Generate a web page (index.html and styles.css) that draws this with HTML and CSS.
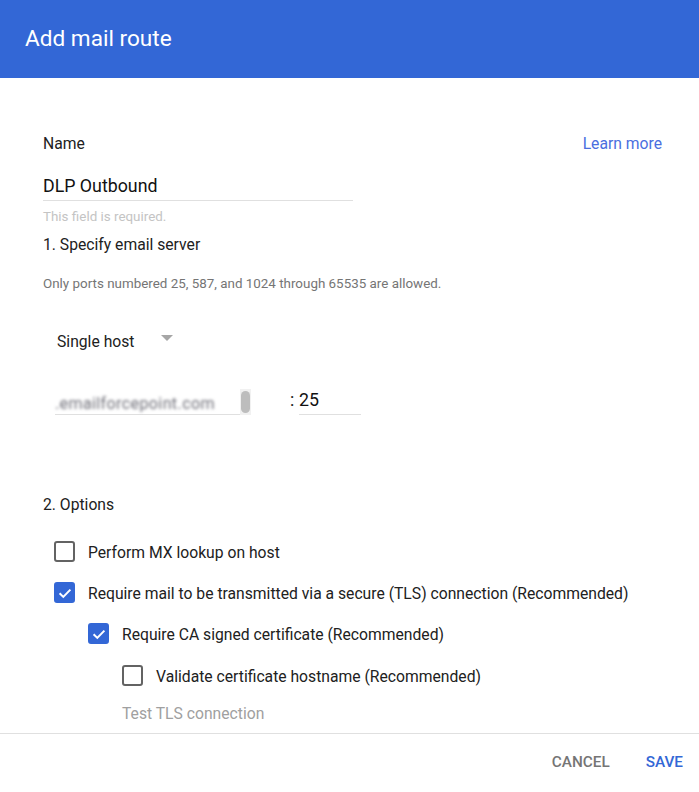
FILE: index.html
```html
<!DOCTYPE html>
<html>
<head>
<meta charset="utf-8">
<link rel="stylesheet" href="styles.css">
</head>
<body>
<div class="dialog">
  <header class="header"><h1 class="title">Add mail route</h1></header>
  <main class="content">
    <div class="name-row">
      <span class="label">Name</span>
      <a class="link">Learn more</a>
    </div>
    <div class="name-field"><span class="name-value">DLP Outbound</span></div>
    <div class="hint">This field is required.</div>
    <div class="section">1. Specify email server</div>
    <div class="note">Only ports numbered 25, 587, and 1024 through 65535 are allowed.</div>
    <div class="select">
      <span class="select-value">Single host</span>
      <span class="arrow"></span>
    </div>
    <div class="host-row">
      <div class="host-field">
        <span class="blurred">.emailforcepoint.com</span>
        <span class="scroll"><span class="pill"></span></span>
      </div>
      <span class="colon">:</span>
      <div class="port-field">25</div>
    </div>
    <div class="section options-title">2. Options</div>
    <div class="check-row lvl0 first">
      <span class="box"></span>
      <span class="check-label">Perform MX lookup on host</span>
    </div>
    <div class="check-row lvl0">
      <span class="box checked"><svg viewBox="0 0 20 20" width="20" height="20"><path d="M4.6 10.2 8.3 13.9 15.4 6.6" fill="none" stroke="#fff" stroke-width="2"/></svg></span>
      <span class="check-label">Require mail to be transmitted via a secure (TLS) connection (Recommended)</span>
    </div>
    <div class="check-row lvl1">
      <span class="box checked"><svg viewBox="0 0 20 20" width="20" height="20"><path d="M4.6 10.2 8.3 13.9 15.4 6.6" fill="none" stroke="#fff" stroke-width="2"/></svg></span>
      <span class="check-label">Require CA signed certificate (Recommended)</span>
    </div>
    <div class="check-row lvl2 last">
      <span class="box"></span>
      <span class="check-label">Validate certificate hostname (Recommended)</span>
    </div>
    <div class="test-tls">Test TLS connection</div>
  </main>
  <footer class="footer">
    <button class="btn cancel">CANCEL</button>
    <button class="btn save">SAVE</button>
  </footer>
</div>
</body>
</html>
```

FILE: styles.css
```css
* { box-sizing: border-box; }
html, body { margin: 0; padding: 0; background: #fff; }
body { font-family: Roboto, "Noto Sans", Arial, sans-serif; color: #212121; }

.header {
  height: 78px;
  background: #3367d6;
  display: flex;
  align-items: center;
  padding-left: 25px;
}
.title {
  margin: 0;
  font-size: 22.6px;
  font-weight: 400;
  color: #fff;
  line-height: 28px;
}

.content { padding: 0 37px 0 43px; }

.name-row {
  margin-top: 56px;
  height: 20px;
  display: flex;
  justify-content: space-between;
  align-items: center;
  font-size: 15.7px;
  line-height: 20px;
}
.link { color: #4a6ee0; cursor: pointer; }

.name-field {
  margin-top: 19px;
  width: 310px;
  height: 28px;
  padding-top: 3px;
  border-bottom: 1px solid #e0e0e0;
}
.name-value { font-size: 17.8px; line-height: 20px; display: block; color: #111; }

.hint {
  margin-top: 8px;
  font-size: 13.4px;
  line-height: 16px;
  color: #c4c4c4;
}
.section {
  margin-top: 10px;
  font-size: 15.7px;
  line-height: 20px;
  color: #212121;
}
.note {
  margin-top: 21px;
  font-size: 13.4px;
  line-height: 16px;
  color: #757575;
}

.select {
  margin-top: 40px;
  margin-left: 14px;
  height: 20px;
  display: flex;
  align-items: center;
  font-size: 15.7px;
  line-height: 20px;
}
.arrow {
  margin-left: 27px;
  margin-top: -8px;
  width: 0; height: 0;
  border-left: 6px solid transparent;
  border-right: 6px solid transparent;
  border-top: 6px solid #a6a6a6;
}

.host-row {
  margin-top: 37px;
  margin-left: 12px;
  display: flex;
  align-items: flex-end;
  height: 26px;
}
.host-field {
  width: 196px;
  height: 26px;
  border-bottom: 1px solid #e0e0e0;
  display: flex;
  align-items: center;
  justify-content: space-between;
}
.blurred {
  font-size: 16px;
  line-height: 20px;
  color: #6f6f78;
  filter: blur(1.4px);
  margin-top: 4px;
  white-space: nowrap;
  letter-spacing: 0.4px;
}
.scroll {
  width: 11px;
  height: 26px;
  background: #f1f1f1;
  display: flex;
  align-items: center;
  justify-content: center;
}
.pill {
  width: 9px;
  height: 22px;
  border-radius: 5px;
  background: #bdbdbd;
}
.colon {
  margin-left: 39px;
  width: 9px;
  font-size: 17.8px;
  line-height: 20px;
  padding-bottom: 5px;
}
.port-field {
  width: 62px;
  height: 26px;
  border-bottom: 1px solid #e0e0e0;
  font-size: 17.8px;
  line-height: 20px;
  color: #111;
  padding-top: 1px;
}

.options-title { margin-top: 80px; }

.check-row {
  display: flex;
  align-items: center;
  height: 21px;
  margin-top: 20px;
  font-size: 15.7px;
  line-height: 20px;
}
.check-row.first { margin-top: 26px; }
.check-row.last { margin-top: 21px; }
.lvl0 { margin-left: 11px; }
.lvl1 { margin-left: 45px; }
.lvl2 { margin-left: 79px; }
.box {
  width: 21px;
  height: 21px;
  border: 2px solid #636363;
  border-radius: 3px;
  margin-right: 13px;
  flex: none;
  display: flex;
  align-items: center;
  justify-content: center;
}
.box.checked {
  background: #3367d6;
  border-color: #3367d6;
}
.box svg { display: block; flex: none; }
.check-label { padding-top: 3px; }

.test-tls {
  margin-top: 18px;
  margin-left: 79px;
  font-size: 15.7px;
  line-height: 20px;
  color: #a0a0a0;
}

.footer {
  margin-top: 9px;
  border-top: 1px solid #e0e0e0;
  height: 59px;
  display: flex;
  justify-content: flex-end;
  align-items: center;
  padding-right: 8px;
  padding-bottom: 2px;
}
.btn {
  background: none;
  border: 0;
  font-family: Roboto, Arial, sans-serif;
  font-size: 15.3px;
  font-weight: 500;
  padding: 8px 8px;
  cursor: pointer;
}
.cancel { color: #757575; margin-right: 20px; }
.save { color: #3367d6; }
```
